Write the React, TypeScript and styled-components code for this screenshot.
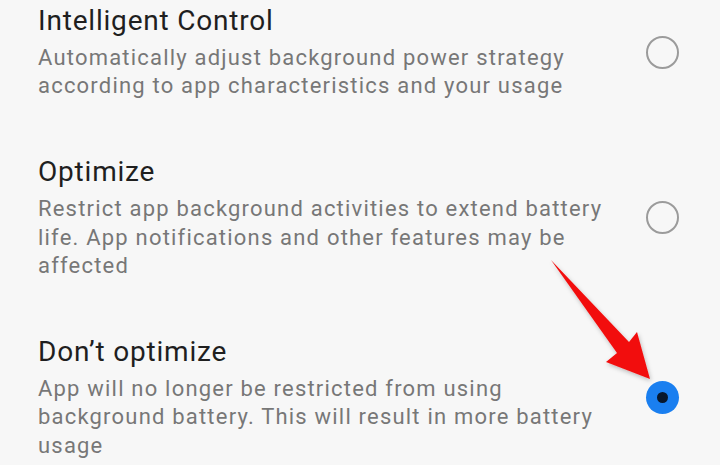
import React from "react";
import styled, { createGlobalStyle } from "styled-components";

const Global = createGlobalStyle`
  html, body { margin: 0; padding: 0; background: #f7f7f7; }
  body { font-family: Roboto, "Noto Sans", "Liberation Sans", sans-serif; }
  #root { width: 720px; height: 465px; overflow: hidden; }
`;

const Page = styled.div`
  position: relative;
  width: 720px;
  height: 465px;
  box-sizing: border-box;
  padding: 3.4px 41px 0 38px;
  display: flex;
  flex-direction: column;
  gap: 53px;
  background: #f7f7f7;
`;

const Row = styled.div`
  display: flex;
  align-items: center;
  gap: 12px;
`;

const TextCol = styled.div<{ $gap: number }>`
  flex: 1;
  min-width: 0;
  display: flex;
  flex-direction: column;
  gap: ${(p) => p.$gap}px;
`;

const Title = styled.div`
  font-size: 28px;
  line-height: 36px;
  letter-spacing: 0.8px;
  color: #1f1f1f;
  white-space: nowrap;
`;

const Desc = styled.div`
  font-size: 22px;
  line-height: 28.5px;
  letter-spacing: 1.2px;
  color: #777777;
  white-space: nowrap;
`;

const Radio = styled.div<{ $checked?: boolean }>`
  flex: none;
  width: 33px;
  height: 33px;
  box-sizing: border-box;
  border-radius: 50%;
  display: flex;
  align-items: center;
  justify-content: center;
  border: ${(p) => (p.$checked ? "none" : "2.5px solid #9b9b9b")};
  background: ${(p) => (p.$checked ? "#1a7ff0" : "transparent")};
`;

const Dot = styled.div`
  width: 11px;
  height: 11px;
  border-radius: 50%;
  background: #08172c;
`;

const ArrowSvg = styled.svg`
  position: absolute;
  left: 0;
  top: 0;
  width: 720px;
  height: 465px;
  pointer-events: none;
  overflow: visible;
`;

type Opt = { title: string; lines: string[]; checked?: boolean; gap: number };

const options: Opt[] = [
  {
    title: "Intelligent Control",
    lines: [
      "Automatically adjust background power strategy",
      "according to app characteristics and your usage",
    ],
    gap: 4.5,
  },
  {
    title: "Optimize",
    lines: [
      "Restrict app background activities to extend battery",
      "life. App notifications and other features may be",
      "affected",
    ],
    gap: 5.5,
  },
  {
    title: "Don\u2019t optimize",
    lines: [
      "App will no longer be restricted from using",
      "background battery. This will result in more battery",
      "usage",
    ],
    checked: true,
    gap: 5,
  },
];

export default function App() {
  return (
    <>
      <Global />
      <Page>
        {options.map((o) => (
          <Row key={o.title}>
            <TextCol $gap={o.gap}>
              <Title>{o.title}</Title>
              <Desc>
                {o.lines.map((l, i) => (
                  <React.Fragment key={i}>
                    {l}
                    {i < o.lines.length - 1 && <br />}
                  </React.Fragment>
                ))}
              </Desc>
            </TextCol>
            <Radio $checked={o.checked}>{o.checked && <Dot />}</Radio>
          </Row>
        ))}
        <ArrowSvg viewBox="0 0 720 465">
          <defs>
            <filter id="sh" x="-20%" y="-20%" width="140%" height="140%">
              <feDropShadow dx="1" dy="2" stdDeviation="2" floodColor="#000" floodOpacity="0.25" />
            </filter>
          </defs>
          <polygon
            points="551,260 629,342 637,332 650,379 606,362 617,353"
            fill="#f20f0f"
            filter="url(#sh)"
          />
        </ArrowSvg>
      </Page>
    </>
  );
}
